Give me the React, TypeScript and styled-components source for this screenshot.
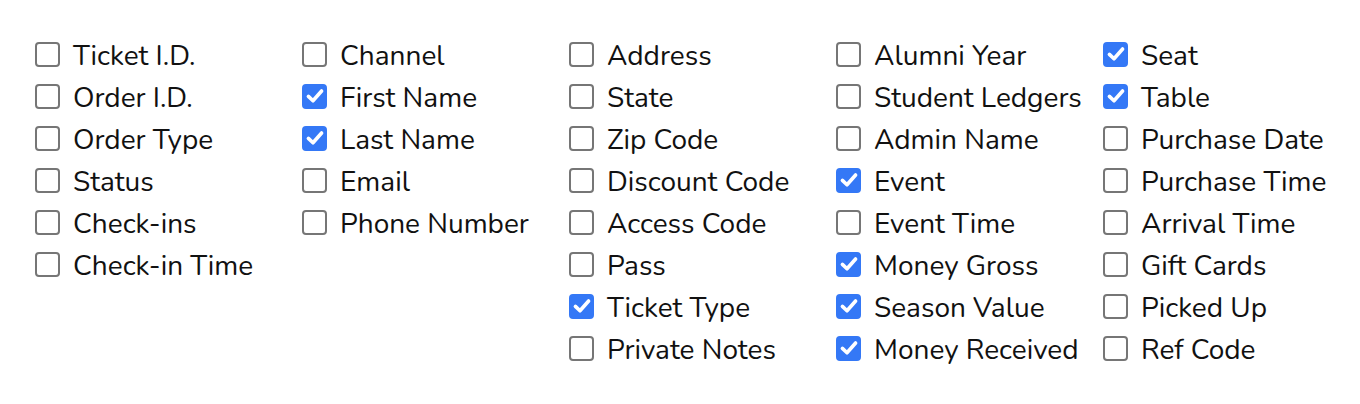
import React, { useState } from 'react';
import styled, { createGlobalStyle } from 'styled-components';

const GlobalStyle = createGlobalStyle`
    body {
        margin: 0;
        background: #fff;
        font-family: 'Nunito', 'Lato', sans-serif;
        color: #111;
    }
`;

const Grid = styled.div`
    display: grid;
    grid-template-columns: repeat(5, 267px);
    padding: 35px 0 0 35px;
`;

const Column = styled.div`
    display: flex;
    flex-direction: column;
`;

const Option = styled.label`
    display: flex;
    align-items: center;
    gap: 13px;
    height: 42px;
    font-size: 28px;
    white-space: nowrap;
    cursor: pointer;
`;

const HiddenInput = styled.input`
    display: none;
`;

const Box = styled.span<{ $checked: boolean }>`
    box-sizing: border-box;
    flex-shrink: 0;
    display: flex;
    align-items: center;
    justify-content: center;
    width: 25px;
    height: 25px;
    margin-top: -4px;
    border-radius: 4px;
    border: 2px solid ${(p) => (p.$checked ? '#3478f6' : '#767676')};
    background: ${(p) => (p.$checked ? '#3478f6' : '#fff')};
`;

type Field = [string, boolean];

const columns: Field[][] = [
    [
        ['Ticket I.D.', false],
        ['Order I.D.', false],
        ['Order Type', false],
        ['Status', false],
        ['Check-ins', false],
        ['Check-in Time', false]
    ],
    [
        ['Channel', false],
        ['First Name', true],
        ['Last Name', true],
        ['Email', false],
        ['Phone Number', false]
    ],
    [
        ['Address', false],
        ['State', false],
        ['Zip Code', false],
        ['Discount Code', false],
        ['Access Code', false],
        ['Pass', false],
        ['Ticket Type', true],
        ['Private Notes', false]
    ],
    [
        ['Alumni Year', false],
        ['Student Ledgers', false],
        ['Admin Name', false],
        ['Event', true],
        ['Event Time', false],
        ['Money Gross', true],
        ['Season Value', true],
        ['Money Received', true]
    ],
    [
        ['Seat', true],
        ['Table', true],
        ['Purchase Date', false],
        ['Purchase Time', false],
        ['Arrival Time', false],
        ['Gift Cards', false],
        ['Picked Up', false],
        ['Ref Code', false]
    ]
];

const Checkbox = ({ name, initial }: { name: string; initial: boolean }) => {
    const [checked, setChecked] = useState(initial);
    return (
        <Option>
            <HiddenInput
                type="checkbox"
                checked={checked}
                onChange={() => setChecked(!checked)}
            />
            <Box $checked={checked}>
                {checked && (
                    <svg width="20" height="20" viewBox="0 0 20 20">
                        <path
                            d="M3.4 10.4 L8 14.8 L16.6 5"
                            fill="none"
                            stroke="#fff"
                            strokeWidth="3.6"
                            strokeLinecap="round"
                            strokeLinejoin="round"
                        />
                    </svg>
                )}
            </Box>
            {name}
        </Option>
    );
};

const App = () => {
    return (
        <>
            <GlobalStyle />
            <Grid>
                {columns.map((fields, i) => (
                    <Column key={i}>
                        {fields.map(([name, checked]) => (
                            <Checkbox key={name} name={name} initial={checked} />
                        ))}
                    </Column>
                ))}
            </Grid>
        </>
    );
};

export default App;
